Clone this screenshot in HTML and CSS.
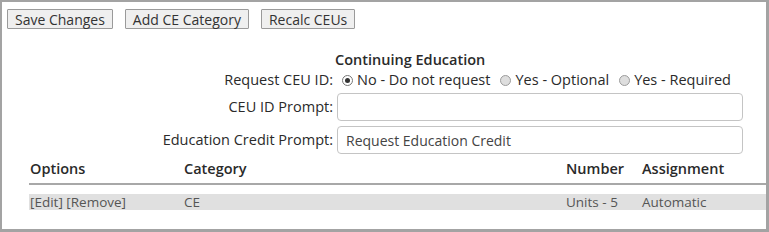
FILE: index.html
```html
<!doctype html>
<html>
<head>
<meta charset="utf-8">
<title>Continuing Education</title>
<link rel="stylesheet" href="styles.css">
</head>
<body>
<div class="frame">
	<div class="toolbar">
		<button type="button" class="btn">Save Changes</button>
		<button type="button" class="btn">Add CE Category</button>
		<button type="button" class="btn">Recalc CEUs</button>
	</div>
	<div class="form">
		<div class="lbl"></div>
		<div class="title">Continuing Education</div>
		<div class="lbl">Request CEU ID:</div>
		<div class="radios">
			<label><input type="radio" name="ceu" checked>No - Do not request</label>
			<label><input type="radio" name="ceu">Yes - Optional</label>
			<label><input type="radio" name="ceu">Yes - Required</label>
		</div>
		<div class="lbl">CEU ID Prompt:</div>
		<div><input type="text" class="txt" value=""></div>
		<div class="lbl">Education Credit Prompt:</div>
		<div><input type="text" class="txt" value="Request Education Credit"></div>
	</div>
	<table class="grid">
		<tr class="head">
			<td class="c1">Options</td>
			<td class="c2">Category</td>
			<td class="c3">Number</td>
			<td class="c4">Assignment</td>
		</tr>
		<tr class="row">
			<td class="c1">[Edit] [Remove]</td>
			<td class="c2">CE</td>
			<td class="c3">Units - 5</td>
			<td class="c4">Automatic</td>
		</tr>
	</table>
</div>
</body>
</html>
```

FILE: styles.css
```css
*{
	margin:0;
	padding:0;
	box-sizing:border-box;
}
body{
	font-family:"Open Sans","Liberation Sans",sans-serif;
	font-size:14.5px;
	color:#2a2a2a;
	background:#fff;
	overflow:hidden;
}
.frame{
	width:769px;
	height:232px;
	border-style:solid;
	border-color:#a3a3a3;
	border-width:2px 3px 3px 2px;
	overflow:hidden;
}
.toolbar{
	display:flex;
	gap:12px;
	padding:7px 0 0 5px;
}
.btn{
	font:inherit;
	font-size:14px;
	color:#333;
	height:20px;
	padding:0 7px;
	background:#efefef;
	border:1px solid #9a9a9a;
	border-radius:1px;
}
.form{
	display:grid;
	grid-template-columns:331px 406px;
	column-gap:4px;
	row-gap:5px;
	margin-top:23px;
	line-height:16px;
}
.lbl{
	text-align:right;
	align-self:center;
}
.title{
	margin-left:-2px;
	height:16px;
	font-weight:600;
	margin-bottom:-1px;
}
.radios{
	display:flex;
	gap:5px;
	height:16px;
	align-items:center;
}
.radios label{
	display:flex;
	align-items:center;
	gap:4px;
}
.radios input{
	appearance:none;
	-webkit-appearance:none;
	width:11px;
	height:11px;
	margin:0 0 0 5px;
	border:1px solid #9c9c9c;
	border-radius:50%;
	background:#dedede;
	position:relative;
}
.radios input:checked{
	background:#fff;
	border-color:#777;
}
.radios input:checked::after{
	content:"";
	position:absolute;
	left:2px;
	top:2px;
	width:5px;
	height:5px;
	border-radius:50%;
	background:#333;
}
.txt{
	display:block;
	width:406px;
	height:28px;
	font:inherit;
	font-size:14px;
	color:#444;
	padding:0 8px;
	border:1px solid #c4c4c4;
	border-radius:4px;
}
.grid{
	border-collapse:separate;
	border-spacing:0;
	margin:1px 0 0 27px;
	width:800px;
}
.grid td{
	padding:0 0 0 1px;
	white-space:nowrap;
}
.head td{
	height:30px;
	vertical-align:middle;
	font-weight:600;
	border-bottom:2px solid #a8a8a8;
	padding-bottom:2px;
}
.row td{
	background:#e0e0e0;
	background-clip:padding-box;
	color:#555;
	height:25px;
	border-top:9px solid #fff;
	font-size:13.5px;
	line-height:16px;
}
.c1{width:154px;}
.c2{width:382px;}
.c3{width:76px;}
```
